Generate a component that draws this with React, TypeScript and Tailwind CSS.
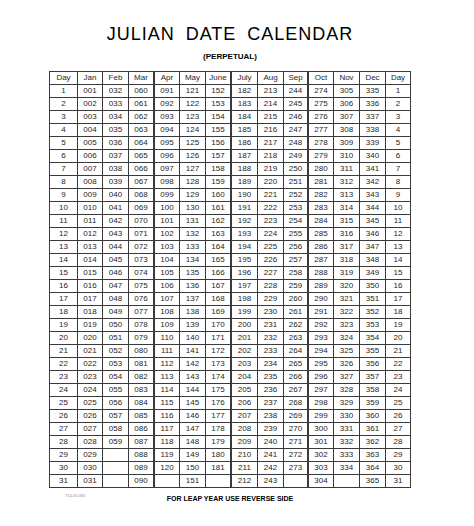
import React from "react";

const months = [
  { name: "Jan", start: 1, days: 31 },
  { name: "Feb", start: 32, days: 28 },
  { name: "Mar", start: 60, days: 31 },
  { name: "Apr", start: 91, days: 30 },
  { name: "May", start: 121, days: 31 },
  { name: "June", start: 152, days: 30 },
  { name: "July", start: 182, days: 31 },
  { name: "Aug", start: 213, days: 31 },
  { name: "Sep", start: 244, days: 30 },
  { name: "Oct", start: 274, days: 31 },
  { name: "Nov", start: 305, days: 30 },
  { name: "Dec", start: 335, days: 31 },
];

// thicker rule after Mar, June, Sep (column index in the full row)
const thick = new Set([3, 6, 9]);

function Cell({ col, children }: { col: number; children?: React.ReactNode }) {
  return (
    <div
      className={
        "flex h-[13px] items-center justify-center border-b border-[#3a3a3a] text-[8px] leading-none text-[#1e1e1e] " +
        (thick.has(col) ? "border-r-2" : "border-r")
      }
    >
      {children}
    </div>
  );
}

export default function App() {
  const header = ["Day", ...months.map((m) => m.name), "Day"];
  const rows = Array.from({ length: 31 }, (_, i) => {
    const day = i + 1;
    return [
      String(day),
      ...months.map((m) =>
        day <= m.days ? String(m.start + i).padStart(3, "0") : "",
      ),
      String(day),
    ];
  });

  return (
    <div className="h-[526px] w-[474px] bg-white font-['Liberation_Sans',Arial,sans-serif]">
      <div className="ml-[49px] flex w-[362px] flex-col pt-[24px]">
        <h1 className="text-center text-[18px] leading-[21px] tracking-[1px] text-black [word-spacing:5px]">
          JULIAN DATE CALENDAR
        </h1>
        <p className="mt-[7px] text-center text-[8px] font-bold leading-[10px] text-black">
          (PERPETUAL)
        </p>

        <div className="mt-[9px] grid grid-cols-[28px_25px_26px_26px_25px_26px_26px_26px_26px_25px_25px_26px_26px_25px] border-l border-t border-[#3a3a3a]">
          {header.map((h, c) => (
            <Cell key={"h" + c} col={c}>
              {h}
            </Cell>
          ))}
          {rows.map((r, ri) =>
            r.map((v, c) => (
              <Cell key={ri + "-" + c} col={c}>
                {v}
              </Cell>
            )),
          )}
        </div>

        <div className="mt-[3px] grid grid-cols-[1fr_auto_1fr] items-start">
          <span className="pl-[16px] pt-[3px] text-[4px] leading-none text-[#888]">
            714-05-081
          </span>
          <span className="pt-[4px] text-[7px] font-bold leading-none text-black">
            FOR LEAP YEAR USE REVERSE SIDE
          </span>
          <span />
        </div>
      </div>
    </div>
  );
}
